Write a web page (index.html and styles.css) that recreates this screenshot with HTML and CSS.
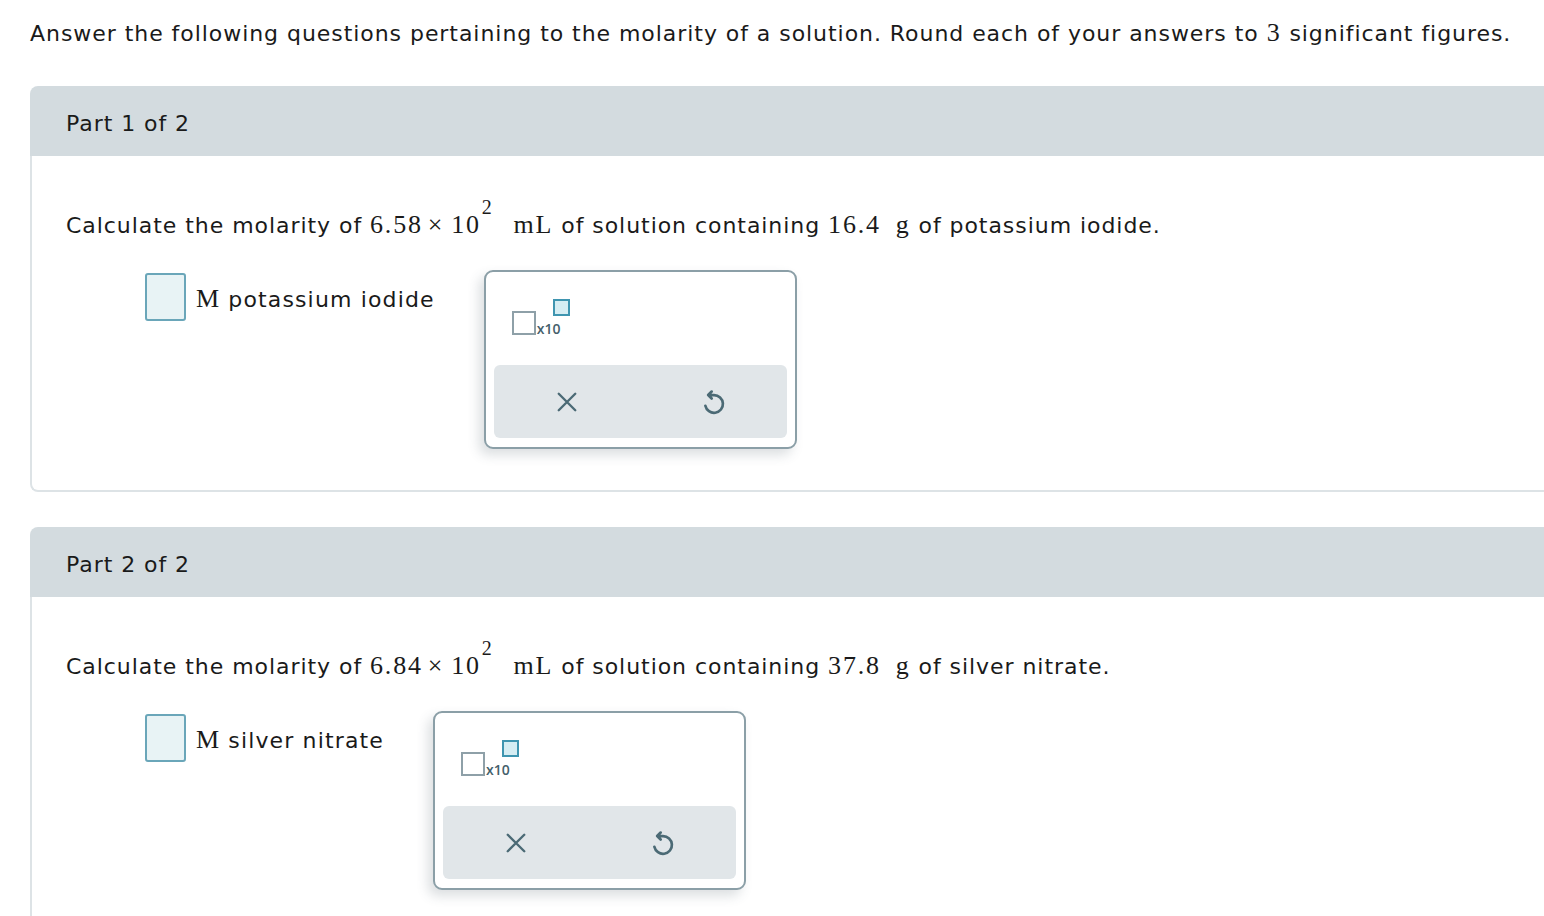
FILE: index.html
```html
<!DOCTYPE html>
<html>
<head>
<meta charset="utf-8">
<link rel="stylesheet" href="styles.css">
</head>
<body>
<p class="intro">Answer the following questions pertaining to the molarity of a solution. Round each of your answers to <span class="m">3</span> significant figures.</p>

<section class="part">
  <div class="part-head">Part 1 of 2</div>
  <div class="part-body">
    <p class="question">Calculate the molarity of <span class="m">6.58<span class="times">×</span>10<sup>2</sup></span> <span class="m unit">mL</span> of solution containing <span class="m">16.4</span> <span class="m unit">g</span> of potassium iodide.</p>
    <div class="answer-row">
      <div class="answer">
        <span class="input"></span>
        <span class="label"><span class="m">M</span> potassium iodide</span>
      </div>
      <div class="popup">
        <div class="sci">
          <span class="sci-box"></span><span class="sci-x">x10</span><span class="sci-exp"></span>
        </div>
        <div class="actions">
          <button class="act" aria-label="clear">
            <svg class="ic-x" width="24" height="24" viewBox="0 0 24 24"><path d="M3 3 L21 21 M21 3 L3 21"/></svg>
          </button>
          <button class="act" aria-label="undo">
            <svg class="ic-undo" width="28" height="28" viewBox="0 0 24 24"><path d="M10 2.2 L7 5.2 L10 8.2 M7 5.2 H12 A7.6 7.6 0 1 1 4.6 14.4"/></svg>
          </button>
        </div>
      </div>
    </div>
  </div>
</section>

<section class="part">
  <div class="part-head">Part 2 of 2</div>
  <div class="part-body">
    <p class="question">Calculate the molarity of <span class="m">6.84<span class="times">×</span>10<sup>2</sup></span> <span class="m unit">mL</span> of solution containing <span class="m">37.8</span> <span class="m unit">g</span> of silver nitrate.</p>
    <div class="answer-row">
      <div class="answer">
        <span class="input"></span>
        <span class="label"><span class="m">M</span> silver nitrate</span>
      </div>
      <div class="popup">
        <div class="sci">
          <span class="sci-box"></span><span class="sci-x">x10</span><span class="sci-exp"></span>
        </div>
        <div class="actions">
          <button class="act" aria-label="clear">
            <svg class="ic-x" width="24" height="24" viewBox="0 0 24 24"><path d="M3 3 L21 21 M21 3 L3 21"/></svg>
          </button>
          <button class="act" aria-label="undo">
            <svg class="ic-undo" width="28" height="28" viewBox="0 0 24 24"><path d="M10 2.2 L7 5.2 L10 8.2 M7 5.2 H12 A7.6 7.6 0 1 1 4.6 14.4"/></svg>
          </button>
        </div>
      </div>
    </div>
  </div>
</section>
</body>
</html>
```

FILE: styles.css
```css
html, body {
  margin: 0;
  padding: 0;
  background: #fff;
}
body {
  font-family: "DejaVu Sans", Verdana, sans-serif;
  font-size: 22px;
  letter-spacing: 0.95px;
  color: #1a1a1a;
  overflow: hidden;
  height: 916px;
}
.m {
  font-family: "Liberation Serif", "Times New Roman", serif;
  font-size: 26px;
  letter-spacing: 1.8px;
}
.label .m {
  letter-spacing: 1px;
}
.times {
  margin: 0 7px 0 5px;
}
.unit {
  margin-left: 7px;
}
sup {
  font-size: 20px;
  line-height: 0;
  vertical-align: 19px;
  margin-left: 1px;
  margin-right: 5px;
}
.intro {
  margin: 0;
  padding: 18px 30px 0 30px;
  line-height: 30px;
  white-space: nowrap;
}
.part {
  margin-left: 30px;
  margin-top: 37px;
}
.part + .part {
  margin-top: 35px;
}
.part-head {
  height: 70px;
  box-sizing: border-box;
  padding-top: 5px;
  background: #d3dbdf;
  border-top-left-radius: 8px;
  padding-left: 36px;
  display: flex;
  align-items: center;
}
.part-body {
  border-left: 2px solid #dde3e6;
  border-bottom: 2px solid #dde3e6;
  border-bottom-left-radius: 8px;
  padding: 50px 0 40px 34px;
  height: 244px;
}
.question {
  margin: 0;
  line-height: 38px;
  height: 38px;
  white-space: nowrap;
}
.answer-row {
  display: flex;
  align-items: flex-start;
  margin-top: 26px;
  margin-left: 79px;
}
.answer {
  display: flex;
  align-items: center;
  margin-top: 3px;
  height: 48px;
}
.input {
  width: 37px;
  height: 44px;
  border: 2px solid #6aa6b9;
  background: #e8f3f5;
  border-radius: 3px;
  display: inline-block;
}
.label {
  margin-left: 10px;
  margin-top: 4px;
  letter-spacing: 1.15px;
}
.popup {
  margin-left: 49px;
  width: 293px;
  height: 166px;
  border: 2px solid #8b9fa7;
  border-radius: 9px;
  background: #fff;
  box-shadow: -5px 6px 12px rgba(60, 80, 90, 0.18);
  padding: 0 8px 9px 8px;
  display: flex;
  flex-direction: column;
  justify-content: space-between;
}
.sci {
  position: relative;
  display: flex;
  align-items: flex-end;
  margin-top: 38px;
  margin-left: 18px;
  height: 25px;
}
.sci-box {
  width: 20px;
  height: 20px;
  border: 2px solid #8ea0a8;
  background: #fff;
  display: inline-block;
}
.sci-x {
  font-family: "Open Sans", "DejaVu Sans", sans-serif;
  font-size: 14px;
  font-weight: 600;
  letter-spacing: 0;
  color: #44606b;
  line-height: 13px;
  margin-left: 1px;
  margin-bottom: 0;
}
.sci-exp {
  position: absolute;
  left: 41px;
  top: -11px;
  width: 13px;
  height: 13px;
  border: 2px solid #3f95b0;
  background: #d5edf3;
}
.actions {
  height: 73px;
  background: #e1e6e9;
  border-radius: 6px;
  display: flex;
  align-items: center;
  justify-content: space-around;
}
.act {
  border: 0;
  background: transparent;
  padding: 0;
  width: 40px;
  height: 40px;
  display: flex;
  align-items: center;
  justify-content: center;
}
.act svg {
  fill: none;
  stroke: #4b6a75;
  stroke-linecap: round;
  stroke-linejoin: round;
}
.ic-x {
  stroke-width: 2.6;
  width: 22px;
  height: 22px;
}
.ic-undo {
  stroke-width: 2.3;
  margin-top: 2px;
}
```
